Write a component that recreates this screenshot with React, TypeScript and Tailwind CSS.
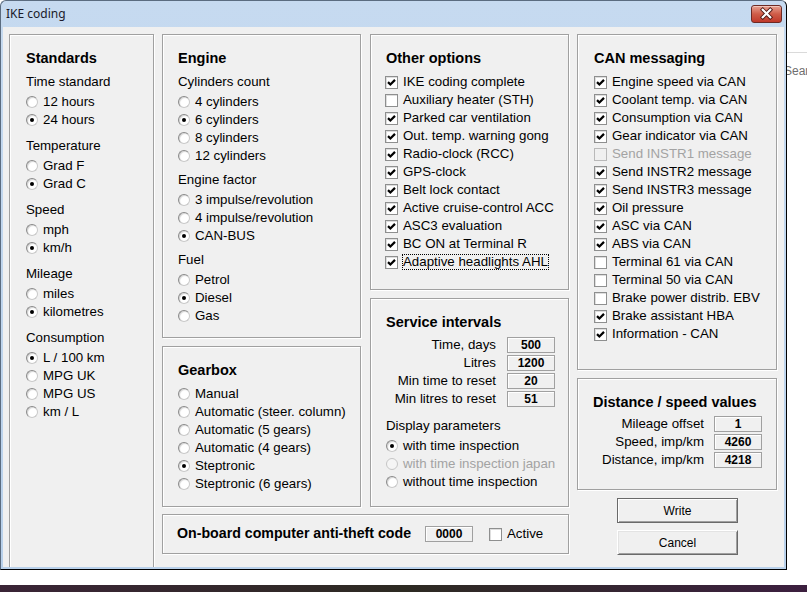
import React from "react";

type Opt = { label: string; checked?: boolean; disabled?: boolean; focus?: boolean };

function RadioBtn({ label, checked, disabled }: Opt) {
  return (
    <div className="flex h-[18px] items-center">
      <span
        className={
          "flex h-[12px] w-[12px] shrink-0 items-center justify-center rounded-full border " +
          (disabled
            ? "border-[#c6c6c6] bg-[#f5f5f5]"
            : "border-t-[#8a8a8a] border-l-[#8a8a8a] border-r-[#c8c8c8] border-b-[#c8c8c8] bg-white shadow-[inset_1px_1px_1px_#d4d4d4]")
        }
      >
        {checked ? <span className="h-[4px] w-[4px] rounded-full bg-black" /> : null}
      </span>
      <span className={"ml-[5px] whitespace-nowrap " + (disabled ? "text-[#a3a3a3]" : "text-black")}>{label}</span>
    </div>
  );
}

function CheckBox({ label, checked, disabled, focus }: Opt) {
  return (
    <div className="flex h-[18px] items-center">
      <span
        className={
          "flex h-[13px] w-[13px] shrink-0 items-center justify-center border " +
          (disabled ? "border-[#b9b9b9] bg-[#f0f0f0]" : "border-[#8e8f8f] bg-white shadow-[inset_1px_1px_0_#dedede]")
        }
      >
        {checked ? (
          <svg width="9" height="9" viewBox="0 0 9 9">
            <path d="M1 4.1 L3.4 6.5 L8 1.9" fill="none" stroke="#000" strokeWidth="2.2" />
          </svg>
        ) : null}
      </span>
      {focus ? (
        <span className="ml-[4px] whitespace-nowrap border border-dotted border-black leading-[14px]">{label}</span>
      ) : (
        <span className={"ml-[5px] whitespace-nowrap " + (disabled ? "text-[#a3a3a3]" : "text-black")}>{label}</span>
      )}
    </div>
  );
}

function Title({ children }: { children: React.ReactNode }) {
  return <div className="h-[18px] whitespace-nowrap text-[14.5px] font-bold leading-[18px]">{children}</div>;
}

function Label({ children, className = "" }: { children: React.ReactNode; className?: string }) {
  return <div className={"h-[18px] whitespace-nowrap leading-[18px] " + className}>{children}</div>;
}

function ValueBox({ value, className = "" }: { value: string; className?: string }) {
  return (
    <span
      className={
        "flex h-[16px] shrink-0 items-center justify-center border border-[#a0a0a0] bg-[#f0f0f0] text-[12px] font-bold shadow-[inset_1px_1px_0_#ffffff] " +
        className
      }
    >
      {value}
    </span>
  );
}

const groupCls = "border border-[#a0a0a0] shadow-[inset_1px_1px_0_#ffffff,1px_1px_0_#ffffff]";

export default function App() {
  const other: Opt[] = [
    { label: "IKE coding complete", checked: true },
    { label: "Auxiliary heater (STH)" },
    { label: "Parked car ventilation", checked: true },
    { label: "Out. temp. warning gong", checked: true },
    { label: "Radio-clock (RCC)", checked: true },
    { label: "GPS-clock", checked: true },
    { label: "Belt lock contact", checked: true },
    { label: "Active cruise-control ACC", checked: true },
    { label: "ASC3 evaluation", checked: true },
    { label: "BC ON at Terminal R", checked: true },
    { label: "Adaptive headlights AHL", checked: true, focus: true },
  ];
  const can: Opt[] = [
    { label: "Engine speed via CAN", checked: true },
    { label: "Coolant temp. via CAN", checked: true },
    { label: "Consumption via CAN", checked: true },
    { label: "Gear indicator via CAN", checked: true },
    { label: "Send INSTR1 message", disabled: true },
    { label: "Send INSTR2 message", checked: true },
    { label: "Send INSTR3 message", checked: true },
    { label: "Oil pressure", checked: true },
    { label: "ASC via CAN", checked: true },
    { label: "ABS via CAN", checked: true },
    { label: "Terminal 61 via CAN" },
    { label: "Terminal 50 via CAN" },
    { label: "Brake power distrib. EBV" },
    { label: "Brake assistant HBA", checked: true },
    { label: "Information - CAN", checked: true },
  ];

  return (
    <div className="flex h-[592px] w-[807px] flex-col overflow-hidden bg-white font-['Liberation_Sans',Arial,sans-serif] text-[13.3px] text-black">
      <div className="flex h-[570px] shrink-0">
        {/* Window */}
        <div className="flex h-[570px] w-[787px] shrink-0 flex-col rounded-t-[6px] border border-[#5b6c80] border-r-black border-b-black bg-gradient-to-b from-[#c6daf0] to-[#b9d1eb]">
          {/* Title bar */}
          <div className="flex h-[26px] shrink-0 items-center justify-between pl-[5px] pr-[4px]">
            <span className="font-['Noto_Sans',sans-serif] text-[12px] text-[#1b1b2a]">IKE coding</span>
            <span className="flex h-[18px] w-[31px] items-center justify-center rounded-[3px] border border-[#6d2a24] bg-gradient-to-b from-[#e5a091] via-[#cf5c48] to-[#c0382a] shadow-[inset_0_1px_0_#f3c6bb]">
              <svg width="31" height="18" viewBox="0 0 31 18">
                <path d="M11.5 4.5 L19.5 12.5 M19.5 4.5 L11.5 12.5" stroke="#4a1410" strokeWidth="4.2" strokeLinecap="square" />
                <path d="M11.5 4.5 L19.5 12.5 M19.5 4.5 L11.5 12.5" stroke="#ffffff" strokeWidth="2.4" strokeLinecap="square" />
              </svg>
            </span>
          </div>
          {/* Frame + client */}
          <div className="flex flex-1 px-[2px] pb-[2px]">
            <div className="flex h-[540px] w-[781px] overflow-hidden bg-[#f0f0f0] pl-[6px] pt-[7px]">
              {/* Standards */}
              <div className={"h-[560px] w-[145px] shrink-0 pl-[16px] pt-[14px] " + groupCls}>
                <Title>Standards</Title>
                <Label className="mt-[6px]">Time standard</Label>
                <div className="mt-[2px]">
                  <RadioBtn label="12 hours" />
                  <RadioBtn label="24 hours" checked />
                </div>
                <Label className="mt-[8px]">Temperature</Label>
                <div className="mt-[2px]">
                  <RadioBtn label="Grad F" />
                  <RadioBtn label="Grad C" checked />
                </div>
                <Label className="mt-[8px]">Speed</Label>
                <div className="mt-[2px]">
                  <RadioBtn label="mph" />
                  <RadioBtn label="km/h" checked />
                </div>
                <Label className="mt-[8px]">Mileage</Label>
                <div className="mt-[2px]">
                  <RadioBtn label="miles" />
                  <RadioBtn label="kilometres" checked />
                </div>
                <Label className="mt-[8px]">Consumption</Label>
                <div className="mt-[2px]">
                  <RadioBtn label="L / 100 km" checked />
                  <RadioBtn label="MPG UK" />
                  <RadioBtn label="MPG US" />
                  <RadioBtn label="km / L" />
                </div>
              </div>

              {/* Middle block */}
              <div className="ml-[8px] flex w-[407px] shrink-0 flex-col">
                <div className="flex">
                  <div className="flex w-[199px] shrink-0 flex-col">
                    <div className={"h-[304px] pl-[15px] pt-[14px] " + groupCls}>
                      <Title>Engine</Title>
                      <Label className="mt-[6px]">Cylinders count</Label>
                      <div className="mt-[2px]">
                        <RadioBtn label="4 cylinders" />
                        <RadioBtn label="6 cylinders" checked />
                        <RadioBtn label="8 cylinders" />
                        <RadioBtn label="12 cylinders" />
                      </div>
                      <Label className="mt-[6px]">Engine factor</Label>
                      <div className="mt-[2px]">
                        <RadioBtn label="3 impulse/revolution" />
                        <RadioBtn label="4 impulse/revolution" />
                        <RadioBtn label="CAN-BUS" checked />
                      </div>
                      <Label className="mt-[6px]">Fuel</Label>
                      <div className="mt-[2px]">
                        <RadioBtn label="Petrol" />
                        <RadioBtn label="Diesel" checked />
                        <RadioBtn label="Gas" />
                      </div>
                    </div>
                    <div className={"mt-[8px] h-[161px] pl-[15px] pt-[14px] " + groupCls}>
                      <Title>Gearbox</Title>
                      <div className="mt-[6px]">
                        <RadioBtn label="Manual" />
                        <RadioBtn label="Automatic (steer. column)" />
                        <RadioBtn label="Automatic (5 gears)" />
                        <RadioBtn label="Automatic (4 gears)" />
                        <RadioBtn label="Steptronic" checked />
                        <RadioBtn label="Steptronic (6 gears)" />
                      </div>
                    </div>
                  </div>
                  <div className="ml-[9px] flex w-[199px] shrink-0 flex-col">
                    <div className={"h-[256px] pl-[14px] pt-[14px] " + groupCls}>
                      <div className="pl-[1px]">
                        <Title>Other options</Title>
                      </div>
                      <div className="mt-[6px]">
                        {other.map((o) => (
                          <CheckBox key={o.label} {...o} />
                        ))}
                      </div>
                    </div>
                    <div className={"mt-[8px] h-[209px] pt-[14px] " + groupCls}>
                      <div className="pl-[15px]">
                        <Title>Service intervals</Title>
                      </div>
                      <div className="mt-[5px]">
                        {[
                          ["Time, days", "500"],
                          ["Litres", "1200"],
                          ["Min time to reset", "20"],
                          ["Min litres to reset", "51"],
                        ].map(([l, v]) => (
                          <div key={l} className="flex h-[18px] items-center">
                            <span className="w-[125px] whitespace-nowrap text-right">{l}</span>
                            <ValueBox value={v} className="ml-[11px] w-[48px]" />
                          </div>
                        ))}
                      </div>
                      <div className="pl-[15px]">
                        <Label className="mt-[9px]">Display parameters</Label>
                        <div className="mt-[2px]">
                          <RadioBtn label="with time inspection" checked />
                          <RadioBtn label="with time inspection japan" disabled />
                          <RadioBtn label="without time inspection" />
                        </div>
                      </div>
                    </div>
                  </div>
                </div>
                <div className={"mt-[7px] flex h-[40px] items-center pl-[14px] " + groupCls}>
                  <span className="w-[248px] shrink-0 whitespace-nowrap text-[14.2px] font-bold">
                    On-board computer anti-theft code
                  </span>
                  <ValueBox value="0000" className="w-[48px]" />
                  <div className="ml-[16px]">
                    <CheckBox label="Active" />
                  </div>
                </div>
              </div>

              {/* Right column */}
              <div className="ml-[8px] flex w-[200px] shrink-0 flex-col">
                <div className={"h-[336px] pl-[16px] pt-[14px] " + groupCls}>
                  <Title>CAN messaging</Title>
                  <div className="mt-[6px]">
                    {can.map((o) => (
                      <CheckBox key={o.label} {...o} />
                    ))}
                  </div>
                </div>
                <div className={"mt-[8px] h-[112px] pt-[14px] " + groupCls}>
                  <div className="pl-[15px]">
                    <Title>Distance / speed values</Title>
                  </div>
                  <div className="mt-[4px]">
                    {[
                      ["Mileage offset", "1"],
                      ["Speed, imp/km", "4260"],
                      ["Distance, imp/km", "4218"],
                    ].map(([l, v]) => (
                      <div key={l} className="flex h-[18px] items-center">
                        <span className="w-[126px] whitespace-nowrap text-right">{l}</span>
                        <ValueBox value={v} className="ml-[10px] w-[48px]" />
                      </div>
                    ))}
                  </div>
                </div>
                <button className="ml-[40px] mt-[8px] flex h-[25px] w-[121px] items-center justify-center border border-[#6a6a6a] bg-[#f0f0f0] text-[12px] shadow-[inset_1px_1px_0_#ffffff,inset_-1px_-1px_0_#a0a0a0]">
                  Write
                </button>
                <button className="ml-[40px] mt-[7px] flex h-[25px] w-[121px] items-center justify-center border border-t-[#ffffff] border-l-[#ffffff] border-r-[#6a6a6a] border-b-[#6a6a6a] bg-[#f0f0f0] text-[12px] shadow-[inset_1px_1px_0_#e3e3e3,inset_-1px_-1px_0_#a0a0a0]">
                  Cancel
                </button>
              </div>
            </div>
          </div>
        </div>
        {/* Right strip of background */}
        <div className="w-[20px] shrink-0 overflow-hidden pt-[52px]">
          <div className="h-[38px] border-t border-[#dadada]">
            <div className="-ml-[3px] pt-[11px] text-[12px] leading-[14px] text-[#6f6f6f]">Searc</div>
          </div>
        </div>
      </div>
      <div className="h-[15px] shrink-0 bg-white" />
      <div className="h-[7px] shrink-0 bg-gradient-to-r from-[#3a2436] via-[#2d2a22] to-[#3c1f3f]" />
    </div>
  );
}
